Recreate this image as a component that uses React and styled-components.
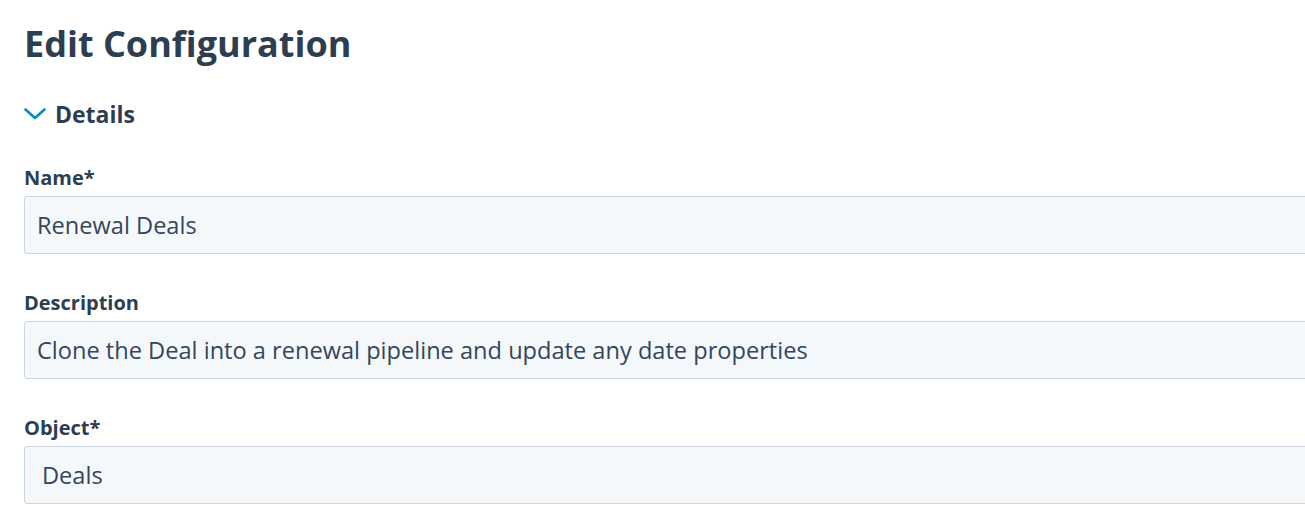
import React from 'react';
import styled, { createGlobalStyle } from 'styled-components';

const GlobalStyle = createGlobalStyle`
  body {
    margin: 0;
    background: #ffffff;
    font-family: "Open Sans", "Noto Sans", sans-serif;
    color: #33475b;
    overflow: hidden;
  }
`;

const Page = styled.div`
  padding: 21px 0 0 24px;
  width: 1320px;
`;

const Title = styled.h1`
  margin: 0;
  font-size: 36px;
  line-height: 46px;
  font-weight: 700;
  color: #2d3e50;
`;

const SectionToggle = styled.div`
  display: flex;
  align-items: center;
  gap: 9px;
  margin-top: 31px;
  font-size: 23px;
  line-height: 32px;
  font-weight: 700;
  color: #2d3e50;
`;

const Field = styled.div`
  display: flex;
  flex-direction: column;
  margin-top: ${p => p.first ? '35px' : '36px'};
`;

const Label = styled.label`
  font-size: 20px;
  line-height: 26px;
  font-weight: 700;
  color: #2d3e50;
  margin-bottom: 5px;
`;

const Input = styled.div`
  box-sizing: border-box;
  height: 58px;
  display: flex;
  align-items: center;
  padding-left: ${p => p.indent || 12}px;
  background: #f5f8fa;
  border: 1px solid #cbd6e2;
  border-radius: 3px;
  font-size: 23.6px;
  color: #33475b;
`;

const fields = [
  { label: 'Name*', value: 'Renewal Deals' },
  { label: 'Description', value: 'Clone the Deal into a renewal pipeline and update any date properties' },
  { label: 'Object*', value: 'Deals', indent: 17 },
];

function Chevron() {
  return (
    <svg width="22" height="12" viewBox="0 0 22 12" fill="none">
      <path d="M1.5 1.5 L11 10 L20.5 1.5" stroke="#0091ae" strokeWidth="2.6" strokeLinecap="round" strokeLinejoin="round" />
    </svg>
  );
}

export default function App() {
  return (
    <>
      <GlobalStyle />
      <Page>
        <Title>Edit Configuration</Title>
        <SectionToggle>
          <Chevron />
          Details
        </SectionToggle>
        {fields.map((f, i) => (
          <Field key={f.label} first={i === 0}>
            <Label>{f.label}</Label>
            <Input indent={f.indent}>{f.value}</Input>
          </Field>
        ))}
      </Page>
    </>
  );
}
